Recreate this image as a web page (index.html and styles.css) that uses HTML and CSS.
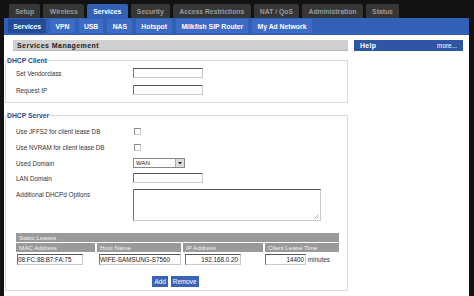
FILE: index.html
```html
<!DOCTYPE html>
<html>
<head>
<meta charset="utf-8">
<link rel="stylesheet" href="styles.css">
</head>
<body>
<div class="page">
  <nav class="tabs">
    <span class="tab">Setup</span>
    <span class="tab">Wireless</span>
    <span class="tab active">Services</span>
    <span class="tab">Security</span>
    <span class="tab">Access Restrictions</span>
    <span class="tab">NAT / QoS</span>
    <span class="tab">Administration</span>
    <span class="tab">Status</span>
  </nav>
  <nav class="subbar">
    <span class="sub active">Services</span>
    <span class="sub">VPN</span>
    <span class="sub">USB</span>
    <span class="sub">NAS</span>
    <span class="sub">Hotspot</span>
    <span class="sub">Milkfish SIP Router</span>
    <span class="sub">My Ad Network</span>
  </nav>
  <div class="content">
    <main class="main">
      <h2 class="mgmt">Services Management</h2>
      <fieldset class="box client">
        <legend>DHCP Client</legend>
        <div class="row"><label>Set Vendorclass</label><input class="txt" type="text"></div>
        <div class="row"><label>Request IP</label><input class="txt" type="text"></div>
      </fieldset>
      <fieldset class="box server">
        <legend>DHCP Server</legend>
        <div class="row r-chk"><label>Use JFFS2 for client lease DB</label><span class="chk"></span></div>
        <div class="row r-chk"><label>Use NVRAM for client lease DB</label><span class="chk"></span></div>
        <div class="row r-sel"><label>Used Domain</label><span class="sel"><span class="sel-v">WAN</span><span class="sel-b"><svg width="6" height="6" viewBox="0 0 6 6"><path d="M1 2h4L3 4.5z" fill="#222"/></svg></span></span></div>
        <div class="row r-lan"><label>LAN Domain</label><input class="txt" type="text"></div>
        <div class="row r-ta"><label>Additional DHCPd Options</label><span class="ta"><svg class="grip" width="5" height="5" viewBox="0 0 5 5"><path d="M4.5 0.5L0.5 4.5M4.5 2.5L2.5 4.5" stroke="#999" stroke-width="0.7"/></svg></span></div>
        <table class="leases">
          <tr><th colspan="4" class="cap">Static Leases</th></tr>
          <tr class="heads"><th class="c1">MAC Address</th><th class="c2">Host Name</th><th class="c3">IP Address</th><th class="c4">Client Lease Time</th></tr>
          <tr class="vals">
            <td><span class="in mac">08:FC:88:B7:FA:75</span></td>
            <td><span class="in host">WIFE-SAMSUNG-S7560</span></td>
            <td><span class="in ip">192.168.0.20</span></td>
            <td><span class="in lt">14400</span> <span class="unit">minutes</span></td>
          </tr>
        </table>
        <div class="btns"><span class="btn">Add</span><span class="btn">Remove</span></div>
      </fieldset>
    </main>
    <aside class="side">
      <div class="help"><span class="help-t">Help</span><span class="more">more...</span></div>
    </aside>
  </div>
</div>
</body>
</html>
```
FILE: styles.css
```css
html, body { margin: 0; padding: 0; }
body { background: #121212; font-family: "Liberation Sans", Arial, sans-serif; width: 474px; height: 296px; overflow: hidden; }
.page { padding: 4px 5px 0 4px; }
.tabs { display: flex; gap: 3px; padding-left: 5px; height: 14px; align-items: stretch; }
.tab { background: #363636; color: #9a9a9a; font-size: 6.8px; font-weight: bold; padding: 0 6.3px; display: flex; align-items: center; border-radius: 2px 2px 0 0; }
.tab.active { background: #3160b6; color: #fff; }
.subbar { background: #3160b6; height: 17px; display: flex; gap: 4px; padding: 1px 4px 0 4px; box-sizing: border-box; align-items: flex-start; }
.sub { background: #3d6cc6; color: #fff; font-size: 6.8px; font-weight: bold; height: 14px; padding: 0 5.2px; display: flex; align-items: center; border-radius: 1px 1px 0 0; }
.sub.active { background: #244b97; }
.content { background: #fff; height: 261px; display: flex; }
.main { width: 343px; padding-left: 1px; }
.mgmt { margin: 5px 0 0 8px; height: 11px; background: #cfcfcf; border-bottom: 1px solid #b5b5b5; box-sizing: border-box; font-size: 7px; font-weight: bold; color: #222; padding-left: 4px; line-height: 11px; letter-spacing: 0.45px; }
.box { border: 1px solid #dadada; margin: 6px 0 0 0; padding: 0 0 0 10px; position: relative; }
.box legend { color: #2b4a8a; font-size: 6.8px; font-weight: bold; padding: 0; margin-left: -9px; }
.client { height: 40px; padding-top: 4px; }
.server { height: 170px; margin-top: 9px; padding-top: 7px; }
.row { display: flex; align-items: center; height: 10px; margin-bottom: 7px; }
.row label { width: 117px; font-size: 6.3px; color: #333; }
.txt { width: 70px; height: 10px; box-sizing: border-box; border: 1px solid #c8c8c8; border-top-color: #555; border-left-color: #777; padding: 0; margin: 0; }
.r-chk { margin-bottom: 6px; }
.chk { width: 7px; height: 7px; box-sizing: border-box; border: 1px solid #888; border-right-color: #ccc; border-bottom-color: #ccc; margin-left: 1px; }
.r-sel { margin-bottom: 5px; }
.sel { width: 52px; height: 10px; box-sizing: border-box; border: 1px solid #888; display: flex; align-items: center; justify-content: space-between; }
.sel-v { font-size: 6px; color: #222; padding-left: 2px; }
.sel-b { width: 8px; height: 8px; background: #ddd; border-left: 1px solid #aaa; display: flex; align-items: center; justify-content: center; }
.r-lan { margin-bottom: 6px; }
.r-ta { align-items: flex-start; height: 32px; margin-bottom: 11px; }
.r-ta label { padding-top: 2px; }
.ta { width: 188px; height: 32px; box-sizing: border-box; border: 1px solid #c8c8c8; border-top-color: #555; border-left-color: #777; position: relative; }
.grip { position: absolute; right: 1px; bottom: 1px; }
.leases { border-collapse: separate; border-spacing: 2px 1px; margin-left: -2px; width: 327px; font-size: 6.2px; }
.leases th { background: #9a9a9a; color: #f4f4f4; font-weight: normal; text-align: left; height: 9px; padding: 0 0 0 3px; line-height: 9px; }
.leases .c1 { width: 76px; }
.leases .c2 { width: 81px; }
.leases .c3 { width: 77px; }
.vals td { padding: 1px 0 0 0; height: 11px; }
.in { display: inline-block; height: 11px; box-sizing: border-box; border: 1px solid #c8c8c8; border-top-color: #555; border-left-color: #777; font-size: 6.3px; line-height: 9px; color: #222; vertical-align: top; }
.mac { width: 66px; margin-left: 1px; }
.host { width: 82px; margin-left: 2px; }
.ip { width: 56px; margin-left: 2px; text-align: right; padding-right: 2px; }
.lt { width: 41px; text-align: right; padding-right: 1px; }
.unit { font-size: 6.3px; color: #333; line-height: 11px; vertical-align: top; }
.btns { display: flex; justify-content: center; gap: 3px; margin-top: 10px; padding-right: 12px; }
.btn { background: #3a63b8; color: #fff; font-size: 6.4px; height: 11px; line-height: 11px; padding: 0 2px; }
.side { flex: 1; padding: 5px 6px 0 6px; }
.help { background: #2f56a6; height: 11px; display: flex; justify-content: space-between; align-items: center; padding: 0 6px 0 6px; }
.help-t { color: #fff; font-weight: bold; font-size: 7px; letter-spacing: 0.3px; }
.more { color: #fff; font-size: 6.4px; }
```
